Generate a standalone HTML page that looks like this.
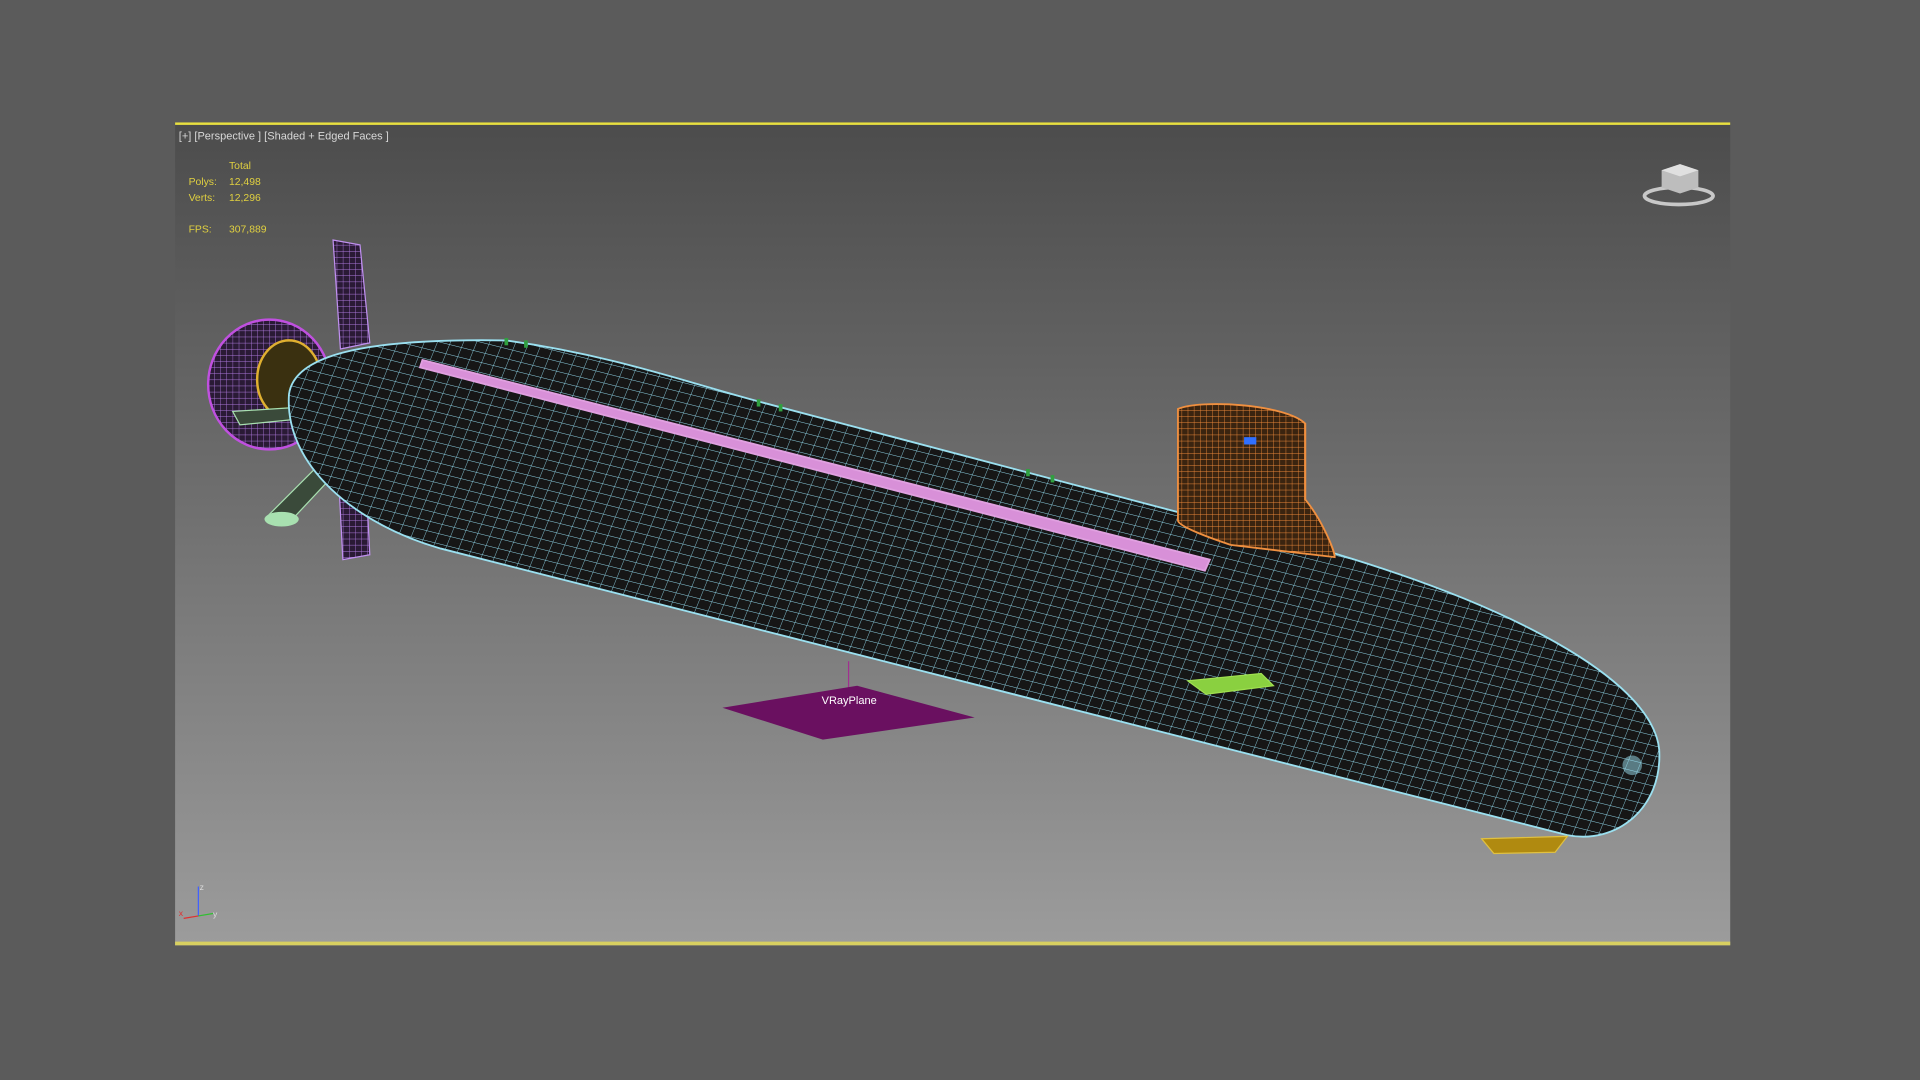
<!DOCTYPE html>
<html><head><style>
html,body{margin:0;padding:0;width:1920px;height:1080px;overflow:hidden;background:#5b5b5b}
svg{display:block}
text{font-family:"Liberation Sans",sans-serif}
</style></head><body>
<svg width="1920" height="1080" viewBox="0 0 1568 882" xmlns="http://www.w3.org/2000/svg">
<defs>
<linearGradient id="vg" x1="0" y1="0" x2="0" y2="1">
<stop offset="0" stop-color="#4c4c4c"/><stop offset="0.45" stop-color="#6e6e6e"/><stop offset="1" stop-color="#9c9c9c"/>
</linearGradient>
<pattern id="grid" width="10" height="8" patternUnits="userSpaceOnUse" patternTransform="rotate(14) skewX(-8)">
<rect width="10" height="8" fill="#161616"/>
<path d="M0 0H10M0 0V8" stroke="#8fd3e6" stroke-width="0.7" fill="none"/>
</pattern>
<pattern id="og" width="5" height="5" patternUnits="userSpaceOnUse">
<rect width="5" height="5" fill="#3a2410"/>
<path d="M0 0H5M0 0V5" stroke="#f08a3a" stroke-width="0.7"/>
</pattern>
<pattern id="pg" width="5" height="5" patternUnits="userSpaceOnUse">
<rect width="5" height="5" fill="#2a1a35"/>
<path d="M0 0H5M0 0V5" stroke="#b07ae0" stroke-width="0.7"/>
</pattern>
</defs>
<rect x="143" y="100" width="1270" height="672" fill="url(#vg)"/>
<rect x="143" y="100" width="1270" height="2" fill="#e8e040"/>
<rect x="143" y="769" width="1270" height="3" fill="#d8d060"/>
<text x="146" y="114" font-size="9" fill="#d8d8d8">[+] [Perspective ] [Shaded + Edged Faces ]</text>
<g font-size="8.5" fill="#e0d040">
<text x="187" y="138">Total</text>
<text x="154" y="151">Polys:</text><text x="187" y="151">12,498</text>
<text x="154" y="164">Verts:</text><text x="187" y="164">12,296</text>
<text x="154" y="190">FPS:</text><text x="187" y="190">307,889</text>
</g>
<ellipse cx="1371" cy="160" rx="28" ry="7" fill="none" stroke="#c8c8c8" stroke-width="3"/>
<path d="M1357 139l15-5 15 5v14l-15 5-15-5z" fill="#bdbdbd"/>
<path d="M1357 139l15-5 15 5-15 5z" fill="#e0e0e0"/>
<path d="M272 196l22 4 8 80-24 5z" fill="url(#pg)" stroke="#c090f0"/>
<path d="M276 380l22 -5 4 78-22 4z" fill="url(#pg)" stroke="#c090f0"/>
<ellipse cx="220" cy="314" rx="50" ry="53" fill="url(#pg)" stroke="#c050e0" stroke-width="2"/>
<ellipse cx="236" cy="310" rx="26" ry="32" fill="#3a3010" stroke="#e0b030" stroke-width="2"/>
<path d="M190 336l80-5 6 8-80 8z" fill="#3a4a3a" stroke="#a8e0b0"/>
<path d="M220 420l50-50 10 10-45 48z" fill="#3a4a3a" stroke="#a8e0b0"/>
<ellipse cx="230" cy="424" rx="14" ry="6" fill="#a8e0b0"/>
<line x1="693" y1="540" x2="693" y2="572" stroke="#a03090"/>
<path d="M590 578L700 560L796 586L672 604Z" fill="#6a1060"/>
<text x="671" y="575" font-size="9" fill="#fff">VRayPlane</text>
<path d="M236 322C240 292 290 276 413 278C500 290 560 312 620 328L1090 452C1250 500 1350 560 1355 612C1358 660 1320 690 1280 682L360 448C290 428 232 380 236 322Z" fill="url(#grid)" stroke="#9be0f0" stroke-width="1.5"/>
<path d="M345 294L988 457L984 466L343 300Z" fill="#d890d8" stroke="#e0a0e0" stroke-width="1.5"/>
<circle cx="1333" cy="625" r="8" fill="#9be0f0" opacity="0.5"/>
<path d="M962 334C980 326 1050 330 1066 346L1066 408C1080 425 1090 450 1090 455L1005 445C990 440 962 430 962 425Z" fill="url(#og)" stroke="#f09040" stroke-width="1.5"/>
<rect x="1016" y="357" width="10" height="6" fill="#3070ff"/>
<path d="M970 556L1030 550L1040 560L985 567Z" fill="#8ad040" stroke="#a0e050"/>
<path d="M1210 685L1280 683L1270 696L1220 697Z" fill="#b08a10" stroke="#e0c040"/>
<g fill="#30a040"><rect x="412" y="276" width="3" height="6"/><rect x="428" y="278" width="3" height="6"/><rect x="618" y="326" width="3" height="6"/><rect x="636" y="330" width="3" height="6"/><rect x="838" y="383" width="3" height="6"/><rect x="858" y="388" width="3" height="6"/></g>
<line x1="162" y1="748" x2="162" y2="724" stroke="#4060ff"/>
<line x1="162" y1="748" x2="150" y2="750" stroke="#e03030"/>
<line x1="162" y1="748" x2="174" y2="746" stroke="#30c030"/>
<text x="163" y="727" font-size="7" fill="#ddd">z</text>
<text x="146" y="748" font-size="7" fill="#e03030">x</text>
<text x="174" y="749" font-size="7" fill="#ddd">y</text>
</svg>
</body></html>
